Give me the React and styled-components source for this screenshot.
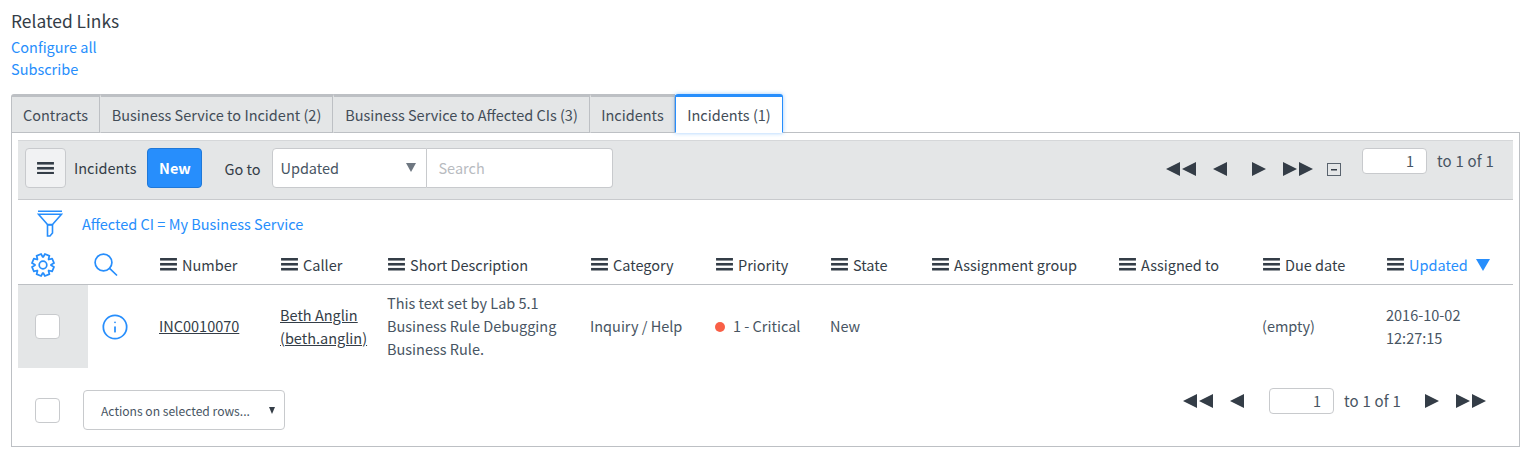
import React from 'react';
import styled, { createGlobalStyle } from 'styled-components';
import { Info } from 'lucide-react';

const GlobalStyle = createGlobalStyle`
  html, body {
    margin: 0;
    padding: 0;
    background: #fff;
    font-family: "Noto Sans CJK SC", "Open Sans", sans-serif;
    font-size: 14.5px;
    color: #343d47;
  }
  * { box-sizing: border-box; }
`;

const BLUE = '#278efc';
const COLUMNS = '70px 71px 121px 107px 203px 125px 115px 101px 187px 144px 124px 127px';

const tabs = [
  { label: 'Contracts', width: 89 },
  { label: 'Business Service to Incident (2)', width: 233 },
  { label: 'Business Service to Affected CIs (3)', width: 257 },
  { label: 'Incidents', width: 85 },
  { label: 'Incidents (1)', width: 108, active: true },
];

const headers = [
  'Number',
  'Caller',
  'Short Description',
  'Category',
  'Priority',
  'State',
  'Assignment group',
  'Assigned to',
  'Due date',
];

const Bars = ({ size = 17 }) => (
  <svg width={size} height={size * 0.76} viewBox="0 0 17 13" fill="#343d47">
    <rect y="0" width="17" height="2.6" />
    <rect y="5" width="17" height="2.6" />
    <rect y="10" width="17" height="2.6" />
  </svg>
);

const Arrow = ({ dir, double }) => (
  <svg width={double ? 30 : 14} height="16" viewBox={double ? '0 0 30 16' : '0 0 14 16'} fill="#343d47">
    {dir === 'left' ? (
      double ? (
        <>
          <path d="M0 8 L14 1 V15 Z" />
          <path d="M16 8 L30 1 V15 Z" />
        </>
      ) : (
        <path d="M0 8 L14 1 V15 Z" />
      )
    ) : double ? (
      <>
        <path d="M0 1 L14 8 L0 15 Z" />
        <path d="M16 1 L30 8 L16 15 Z" />
      </>
    ) : (
      <path d="M0 1 L14 8 L0 15 Z" />
    )}
  </svg>
);

const Funnel = () => (
  <svg width="26" height="27" viewBox="0 0 26 27" fill="none" stroke={BLUE} strokeWidth="1.6">
    <path d="M1 1.2 H25 M1.5 4.2 H24.5 L15.5 14.5 H10.5 Z" />
    <path d="M10.5 15 H15.5 V23 L13 26 H10.5 Z" />
  </svg>
);

// eight-tooth cog outline, points worked out from the angles
const gearPath = () => {
  const pts = [];
  for (let i = 0; i < 8; i++) {
    const a = (i * Math.PI) / 4 + Math.PI / 8;
    [
      [-0.36, 8],
      [-0.22, 11.2],
      [0.22, 11.2],
      [0.36, 8],
    ].forEach(([da, r]) => {
      pts.push(`${(12 + r * Math.cos(a + da)).toFixed(2)} ${(12 + r * Math.sin(a + da)).toFixed(2)}`);
    });
  }
  return `M${pts.join(' L')} Z`;
};

const Gear = () => (
  <svg width="24" height="24" viewBox="0 0 24 24" fill="none" stroke={BLUE} strokeWidth="1.7" strokeLinejoin="round">
    <path d={gearPath()} />
    <circle cx="12" cy="12" r="3.8" />
  </svg>
);

const Magnifier = () => (
  <svg width="24" height="23" viewBox="0 0 24 23" fill="none" stroke={BLUE} strokeWidth="1.7" strokeLinecap="round">
    <circle cx="9.5" cy="9.5" r="8.4" />
    <path d="M15.6 15.4 L22.5 22" />
  </svg>
);

const App = () => (
  <Page>
    <GlobalStyle />
    <Title>Related Links</Title>
    <LinkLine>Configure all</LinkLine>
    <LinkLine>Subscribe</LinkLine>

    <TabStrip>
      {tabs.map((t) => (
        <Tab key={t.label} $w={t.width} $active={t.active}>
          {t.label}
        </Tab>
      ))}
    </TabStrip>

    <Panel>
      <Toolbar>
        <MenuButton>
          <Bars />
        </MenuButton>
        <ListName>Incidents</ListName>
        <NewButton>New</NewButton>
        <GoTo>Go to</GoTo>
        <SelectBox>
          Updated
          <Caret />
        </SelectBox>
        <SearchBox>Search</SearchBox>
        <TopPager>
          <PagerIcons>
            <Arrow dir="left" double />
            <Arrow dir="left" />
            <Arrow dir="right" />
            <Arrow dir="right" double />
          </PagerIcons>
          <Collapse />
          <PageInput>1</PageInput>
          <PageText>to 1 of 1</PageText>
        </TopPager>
      </Toolbar>

      <FilterRow>
        <FilterIcon>
          <Funnel />
        </FilterIcon>
        <FilterText>Affected CI = My Business Service</FilterText>
      </FilterRow>

      <HeaderRow>
        <GearCell>
          <Gear />
        </GearCell>
        <SearchCell>
          <Magnifier />
        </SearchCell>
        {headers.map((h) => (
          <HeaderCell key={h}>
            <Bars />
            {h}
          </HeaderCell>
        ))}
        <HeaderCell $sorted>
          <Bars />
          Updated
          <SortArrow />
        </HeaderCell>
      </HeaderRow>

      <DataRow>
        <CheckCell>
          <CheckBox />
        </CheckCell>
        <InfoCell>
          <Info size={28} color={BLUE} strokeWidth={1.5} />
        </InfoCell>
        <Cell>
          <RowLink>INC0010070</RowLink>
        </Cell>
        <Cell>
          <RowLink>
            Beth Anglin
            <br />
            (beth.anglin)
          </RowLink>
        </Cell>
        <Cell>
          This text set by Lab 5.1
          <br />
          Business Rule Debugging
          <br />
          Business Rule.
        </Cell>
        <Cell>Inquiry / Help</Cell>
        <Cell>
          <Dot />1 - Critical
        </Cell>
        <Cell>New</Cell>
        <Cell />
        <Cell />
        <Cell>(empty)</Cell>
        <Cell>
          2016-10-02
          <br />
          12:27:15
        </Cell>
      </DataRow>

      <Footer>
        <FooterCheck>
          <CheckBox />
        </FooterCheck>
        <ActionSelect>
          Actions on selected rows...
          <SmallCaret />
        </ActionSelect>
        <BottomPager>
          <BottomIcons>
            <Arrow dir="left" double />
            <Arrow dir="left" />
          </BottomIcons>
          <PageInput>1</PageInput>
          <BottomText>to 1 of 1</BottomText>
          <BottomIcons>
            <Arrow dir="right" />
            <Arrow dir="right" double />
          </BottomIcons>
        </BottomPager>
      </Footer>
    </Panel>
  </Page>
);

export default App;

const Page = styled.div`
  width: 1530px;
  height: 462px;
  padding: 9px 10px 0 11px;
  overflow: hidden;
`;

const Title = styled.div`
  font-size: 17.4px;
  line-height: 24px;
  color: #343d47;
  margin-bottom: 3px;
`;

const LinkLine = styled.div`
  line-height: 22px;
  color: ${BLUE};
`;

const TabStrip = styled.div`
  display: flex;
  margin-top: 14px;
  height: 39px;
  position: relative;
  z-index: 1;
`;

const Tab = styled.div`
  width: ${(p) => p.$w}px;
  display: flex;
  align-items: center;
  justify-content: center;
  color: #434d58;
  white-space: nowrap;
  background: ${(p) => (p.$active ? '#fff' : '#e4e6e7')};
  border-top: 3px solid ${(p) => (p.$active ? BLUE : '#bdc0c4')};
  border-right: 1px solid ${(p) => (p.$active ? BLUE : '#bdc0c4')};
  border-left: 1px solid ${(p) => (p.$active ? BLUE : 'transparent')};
  border-bottom: 1px solid ${(p) => (p.$active ? '#fff' : '#bdc0c4')};
  border-radius: ${(p) => (p.$active ? '3px 3px 0 0' : '0')};
  &:first-child {
    border-left: 1px solid #bdc0c4;
    border-radius: 3px 0 0 0;
  }
  ${(p) => p.$active && 'box-shadow: 0 0 4px rgba(39, 142, 252, 0.45);'}
`;

const Panel = styled.div`
  width: 1509px;
  height: 315px;
  margin-top: -1px;
  padding: 7px 6px 0;
  border: 1px solid #bdc0c4;
`;

const Toolbar = styled.div`
  height: 60px;
  display: flex;
  align-items: flex-start;
  padding-top: 7px;
  padding-left: 7px;
  background: #e4e6e7;
  border: 1px solid #d5d7d9;
  border-width: 1px 0 1px 0;
  border-bottom-color: #c8cacd;
`;

const MenuButton = styled.div`
  width: 41px;
  height: 40px;
  display: flex;
  align-items: center;
  justify-content: center;
  background: #f1f2f3;
  border: 1px solid #c8cacd;
  border-radius: 4px;
`;

const ListName = styled.div`
  margin-left: 8px;
  line-height: 40px;
  color: #343d47;
`;

const NewButton = styled.div`
  width: 55px;
  height: 40px;
  margin-left: 11px;
  line-height: 38px;
  text-align: center;
  font-weight: 700;
  color: #fff;
  background: ${BLUE};
  border: 1px solid #1f78d8;
  border-radius: 4px;
`;

const GoTo = styled.div`
  margin-left: 22px;
  width: 48px;
  line-height: 42px;
`;

const SelectBox = styled.div`
  width: 155px;
  height: 40px;
  display: flex;
  align-items: center;
  justify-content: space-between;
  padding: 0 10px 2px 7px;
  background: #fff;
  color: #485563;
  border: 1px solid #c8cacd;
  border-radius: 4px 0 0 4px;
`;

const Caret = styled.span`
  width: 0;
  height: 0;
  border-left: 5.5px solid transparent;
  border-right: 5.5px solid transparent;
  border-top: 9px solid #6e7781;
`;

const SearchBox = styled.div`
  width: 186px;
  height: 40px;
  line-height: 38px;
  padding-left: 11px;
  background: #fff;
  color: #b8bbbf;
  border: 1px solid #c8cacd;
  border-left: 0;
  border-radius: 0 4px 4px 0;
`;

const TopPager = styled.div`
  margin-left: auto;
  display: flex;
  align-items: flex-start;
  padding-right: 19px;
`;

const PagerIcons = styled.div`
  display: flex;
  align-items: center;
  gap: 17px;
  height: 16px;
  margin-top: 13px;
  svg:nth-child(2) {
    margin-right: 8px;
  }
`;

const Collapse = styled.div`
  width: 14px;
  height: 13px;
  margin: 15px 21px 0 14px;
  background: linear-gradient(#343d47, #343d47) center / 6px 1.5px no-repeat;
  border: 1px solid #59636e;
`;

const PageInput = styled.div`
  width: 65px;
  height: 26px;
  flex: none;
  line-height: 24px;
  text-align: right;
  padding-right: 12px;
  background: #fff;
  color: #485563;
  border: 1px solid #c8cacd;
  border-radius: 4px;
`;

const PageText = styled.div`
  margin-left: 10px;
  font-size: 15px;
  letter-spacing: 0.2px;
  line-height: 26px;
  color: #485563;
`;

const BottomText = styled(PageText)`
  margin-left: 10px;
  white-space: nowrap;
`;

const FilterRow = styled.div`
  height: 50px;
  display: flex;
  align-items: center;
  padding-bottom: 4px;
`;

const FilterIcon = styled.div`
  width: 64px;
  padding-left: 19px;
  display: flex;
`;

const FilterText = styled.div`
  color: ${BLUE};
`;

const HeaderRow = styled.div`
  display: grid;
  grid-template-columns: ${COLUMNS};
  height: 35px;
  align-items: center;
  padding-bottom: 5px;
  border-bottom: 1px solid #bdc0c4;
`;

const GearCell = styled.div`
  padding-left: 13px;
  display: flex;
`;

const SearchCell = styled.div`
  padding-left: 6px;
  display: flex;
`;

const HeaderCell = styled.div`
  display: flex;
  align-items: center;
  gap: 5px;
  padding-left: 1px;
  white-space: nowrap;
  color: ${(p) => (p.$sorted ? BLUE : '#343d47')};
`;

const SortArrow = styled.span`
  width: 0;
  height: 0;
  margin-left: 3px;
  border-left: 7px solid transparent;
  border-right: 7px solid transparent;
  border-top: 12px solid ${BLUE};
`;

const DataRow = styled.div`
  display: grid;
  grid-template-columns: ${COLUMNS};
  height: 83px;
  align-items: center;
  color: #485563;
  line-height: 23px;
`;

const CheckCell = styled.div`
  height: 100%;
  background: #e4e6e7;
  display: flex;
  align-items: center;
  padding-left: 17px;
`;

const CheckBox = styled.div`
  width: 25px;
  height: 25px;
  background: #fff;
  border: 1px solid #c8cacd;
  border-radius: 4px;
`;

const InfoCell = styled.div`
  padding-left: 13px;
  display: flex;
`;

const Cell = styled.div`
  white-space: nowrap;
  padding-bottom: 2px;
`;

const RowLink = styled.span`
  display: inline-block;
  text-decoration: underline;
  color: #343d47;
`;

const Dot = styled.span`
  display: inline-block;
  width: 10px;
  height: 10px;
  margin-right: 8px;
  border-radius: 50%;
  background: #f95f46;
`;

const Footer = styled.div`
  display: flex;
  align-items: flex-start;
  padding-top: 22px;
`;

const FooterCheck = styled.div`
  padding: 8px 0 0 17px;
  width: 65px;
`;

const ActionSelect = styled.div`
  width: 202px;
  height: 40px;
  display: flex;
  align-items: center;
  justify-content: space-between;
  padding: 0 9px 0 17px;
  font-size: 12.1px;
  color: #485563;
  background: #fff;
  border: 1px solid #c8cacd;
  border-radius: 4px;
`;

const SmallCaret = styled.span`
  width: 0;
  height: 0;
  border-left: 3.5px solid transparent;
  border-right: 3.5px solid transparent;
  border-top: 7px solid #343d47;
`;

const BottomPager = styled.div`
  margin-left: auto;
  display: flex;
  align-items: center;
  padding-right: 27px;
  height: 26px;
  margin-top: -2px;
`;

const BottomIcons = styled.div`
  display: flex;
  align-items: center;
  gap: 17px;
  &:first-child {
    margin-right: 25px;
  }
  &:last-child {
    margin-left: 24px;
  }
`;
